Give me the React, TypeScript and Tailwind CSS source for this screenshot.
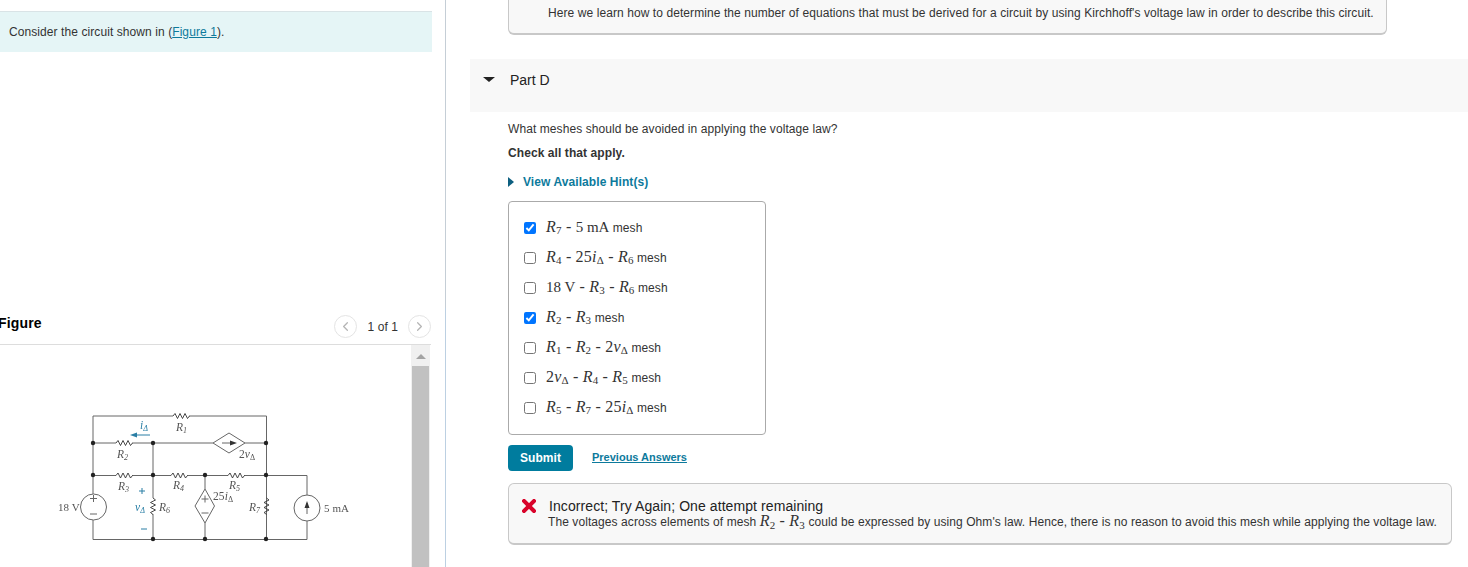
import type { ReactNode } from 'react';
import { Check, ChevronLeft, ChevronRight } from 'lucide-react';

function Sub({ children }: { children: ReactNode }) {
  return <sub className="text-[11px] not-italic">{children}</sub>;
}

function Math({ children }: { children: ReactNode }) {
  return <span className="font-['Liberation_Serif',serif] text-[16px] leading-none tracking-[0.2px] text-[#333]">{children}</span>;
}

function Unit({ children }: { children: ReactNode }) {
  return <span className="text-[15px] tracking-normal">{children}</span>;
}

function R({ n }: { n: number }) {
  return (
    <i>
      R<Sub>{n}</Sub>
    </i>
  );
}

const options: { checked: boolean; math: ReactNode }[] = [
  { checked: true, math: <><R n={7} /> - <Unit>5 mA</Unit></> },
  { checked: false, math: <><R n={4} /> - 25<i>i</i><Sub>Δ</Sub> - <R n={6} /></> },
  { checked: false, math: <><Unit>18 V</Unit> - <R n={3} /> - <R n={6} /></> },
  { checked: true, math: <><R n={2} /> - <R n={3} /></> },
  { checked: false, math: <><R n={1} /> - <R n={2} /> - 2<i>v</i><Sub>Δ</Sub></> },
  { checked: false, math: <>2<i>v</i><Sub>Δ</Sub> - <R n={4} /> - <R n={5} /></> },
  { checked: false, math: <><R n={5} /> - <R n={7} /> - 25<i>i</i><Sub>Δ</Sub></> },
];

function zigH(x: number, y: number) {
  return `M${x} ${y} l2 -2.5 l2.5 5 l2.5 -5 l2.5 5 l2.5 -5 l2.5 5 l2 -2.5`;
}

function zigV(x: number, y: number) {
  return `M${x} ${y} l2.5 2 l-5 2.5 l5 2.5 l-5 2.5 l5 2.5 l-5 2.5 l2.5 2`;
}

function Circuit() {
  const nodes = [
    [93, 443], [153, 443], [266, 443],
    [93, 475], [153, 475], [205, 475], [266, 475],
    [153, 539], [205, 539], [266, 539],
  ];
  return (
    <svg viewBox="0 345 410 222" className="block h-[222px] w-[410px] shrink-0 blur-[0.35px]">
      <g fill="none" stroke="#666" strokeWidth="1">
        <path d="M173 416H93V494M189 416H266.5V539.5M93 520V539.5H307V521M93 443H116M132 443H213M245 443H266" />
        <path d="M93 475.5H116M132 475.5H171M187 475.5H228M244 475.5H307V495M153 443V498M153 514V539M205 475V489M205 523V539M266.5 498V515" />
        <circle cx="93.5" cy="507" r="13" />
        <circle cx="307" cy="508" r="13" />
        <path d="M213 443L229 433L245 443L229 453Z" />
        <path d="M195 506L205 489L214.500 506L205 523Z" />
        <path d="M222 443H232M90 498.500H97M93.500 495V502M90 514H97M201.500 499H208.500M205 495.500V502.500M201.500 513H208.500" />
        <path d="M307 514V503" />
      </g>
      <g fill="none" stroke="#333" strokeWidth="0.9">
        <path d={zigH(173, 416)} />
        <path d={zigH(116, 443)} />
        <path d={zigH(116, 475.5)} />
        <path d={zigH(171, 475.5)} />
        <path d={zigH(228, 475.5)} />
        <path d={zigV(153, 498)} />
        <path d={zigV(266.5, 498)} />
      </g>
      <path d="M237 443L230 440.500V445.500Z M307 501L304.500 508H309.500Z" fill="#333" />
      <path d="M130 435L137 432.500V437.500Z" fill="#2a7fa5" />
      <path d="M135 435H150" stroke="#2a7fa5" strokeWidth="1" />
      {nodes.map(([x, y]) => (
        <circle key={`${x}-${y}`} cx={x} cy={y} r="2.200" fill="#222" />
      ))}
      <g fontFamily="'Liberation Serif', serif" fontSize="11.500" fill="#555">
        <text x="176" y="431" fontStyle="italic">R<tspan fontSize="8" dy="2">1</tspan></text>
        <text x="117" y="458" fontStyle="italic">R<tspan fontSize="8" dy="2">2</tspan></text>
        <text x="118" y="490" fontStyle="italic">R<tspan fontSize="8" dy="2">3</tspan></text>
        <text x="173" y="489" fontStyle="italic">R<tspan fontSize="8" dy="2">4</tspan></text>
        <text x="229" y="489" fontStyle="italic">R<tspan fontSize="8" dy="2">5</tspan></text>
        <text x="159" y="511" fontStyle="italic">R<tspan fontSize="8" dy="2">6</tspan></text>
        <text x="249" y="511" fontStyle="italic">R<tspan fontSize="8" dy="2">7</tspan></text>
        <text x="239" y="458">2<tspan fontStyle="italic">v</tspan><tspan fontSize="8" dy="2">Δ</tspan></text>
        <text x="213" y="500">25<tspan fontStyle="italic">i</tspan><tspan fontSize="8" dy="2">Δ</tspan></text>
        <text x="58" y="510.500" fontSize="11">18 V</text>
        <text x="324" y="511.500" fontSize="11">5 mA</text>
      </g>
      <g fontFamily="'Liberation Serif', serif" fontSize="11.500" fill="#2a7fa5">
        <text x="140" y="429" fontStyle="italic">i<tspan fontSize="8" dy="2">Δ</tspan></text>
        <text x="135" y="511" fontStyle="italic">v<tspan fontSize="8" dy="2">Δ</tspan></text>
      </g>
      <path d="M139 491H145M142 488V494M141 529H147" stroke="#2a7fa5" strokeWidth="1" />
    </svg>
  );
}

export default function App() {
  return (
    <div className="flex h-[567px] w-[1468px] overflow-hidden bg-white font-['Liberation_Sans',Arial,sans-serif] text-xs tracking-[0.08px] text-[#333]">
      <div className="flex w-[446px] shrink-0 flex-col">
        <div className="h-[308px] shrink-0 border-r border-[#c5ced6] pt-[11px]">
          <div className="flex h-[41px] w-[432px] items-center border-t border-[#d9e3e6] bg-[#e5f5f6] pl-[9px]">
            <p>
              Consider the circuit shown in (<a className="text-[#0d7a9c] underline">Figure 1</a>).
            </p>
          </div>
        </div>
        <div className="flex min-h-0 flex-1 flex-col border-r border-[#bcd0e2]">
          <div className="flex h-[37px] w-[431px] shrink-0 items-center border-b border-[#ddd]">
            <h2 className="-ml-[2px] -mt-[7px] text-sm font-bold tracking-[0.15px] text-black">Figure</h2>
            <div className="ml-auto flex items-center">
              <span className="flex h-[23px] w-[23px] items-center justify-center rounded-full border border-[#e4e4e4] text-[#b5b5b5]">
                <ChevronLeft size={15} />
              </span>
              <span className="mx-[10px] pt-px">1 of 1</span>
              <span className="flex h-[23px] w-[23px] items-center justify-center rounded-full border border-[#e4e4e4] text-[#b5b5b5]">
                <ChevronRight size={15} />
              </span>
            </div>
          </div>
          <div className="flex min-h-0 flex-1">
            <Circuit />
            <div className="ml-px flex w-[19px] shrink-0 flex-col items-center bg-[#f0f0f0]">
              <div className="mt-[9px] h-0 w-0 border-x-[5px] border-b-[5px] border-x-transparent border-b-[#a3a3a3]" />
              <div className="mt-[7px] w-[17px] flex-1 bg-[#c1c1c1]" />
            </div>
          </div>
        </div>
      </div>

      <div className="min-w-0 flex-1 pl-[24px]">
        <div className="-mt-[14px] ml-[38px] h-[49px] w-[879px] rounded-b-md border-x border-b-2 border-[#c8c8c8] bg-[#f8f8f8]">
          <div className="flex h-[18px] items-center pl-[12px]">
            <Check size={16} strokeWidth={3} className="text-[#4a9a2e]" />
            <p className="ml-[11px] text-sm font-bold leading-[18px] text-[#222]">Correct</p>
          </div>
          <p className="pl-[39px] pt-px">Here we learn how to determine the number of equations that must be derived for a circuit by using Kirchhoff's voltage law in order to describe this circuit.</p>
        </div>

        <div className="mt-[24px] flex h-[53px] items-center bg-[#f8f8f8] pb-[12px]">
          <span className="ml-[13px] h-0 w-0 border-x-[6px] border-t-[5px] border-x-transparent border-t-[#222]" />
          <h3 className="ml-[15px] text-sm tracking-normal text-[#222]">Part D</h3>
        </div>

        <div className="pl-[38px]">
          <p className="mt-[10px] leading-[14px]">What meshes should be avoided in applying the voltage law?</p>
          <p className="mt-[10px] font-bold leading-[14px]">Check all that apply.</p>
          <div className="mt-[15px] flex items-center gap-[9px] font-bold leading-[14px] text-[#0d7a9c]">
            <span className="h-0 w-0 border-y-[5px] border-l-[6px] border-y-transparent border-l-[#0d5f80]" />
            <span>View Available Hint(s)</span>
          </div>

          <div className="mt-[12px] flex h-[234px] w-[258px] flex-col rounded border border-[#aaa] px-[15px] py-[11px]">
            {options.map((o, i) => (
              <label key={i} className="flex h-[30px] items-center gap-[10px]">
                <input type="checkbox" checked={o.checked} readOnly className="m-0 h-3 w-3 shrink-0" />
                <span className="-mt-[2px]">
                  <Math>{o.math}</Math> mesh
                </span>
              </label>
            ))}
          </div>

          <div className="mt-[10px] flex items-center">
            <button className="h-[26px] w-[65px] rounded-sm bg-[#007c9e] text-xs font-bold text-white">Submit</button>
            <a className="ml-[19px] -mt-[1px] text-[11px] font-bold tracking-normal text-[#0d7a9c] underline">Previous Answers</a>
          </div>

          <div className="mt-[12px] flex h-[62px] w-[944px] rounded-md border border-b-2 border-[#c8c8c8] bg-[#f8f8f8] pl-[13px] pt-[15px]">
            <svg viewBox="0 0 14 14" className="h-[14px] w-[14px] shrink-0">
              <path d="M2 2L12 12M12 2L2 12" stroke="#d9042b" strokeWidth="4" strokeLinecap="square" fill="none" />
            </svg>
            <div className="ml-[13px] -mt-[1px]">
              <p className="text-sm leading-[16px] tracking-[0.08px] text-[#222]">Incorrect; Try Again; One attempt remaining</p>
              <p className="-ml-px -mt-px leading-[14px]">
                The voltages across elements of mesh <Math><R n={2} /> - <R n={3} /></Math> could be expressed by using Ohm's law. Hence, there is no reason to avoid this mesh while applying the voltage law.
              </p>
            </div>
          </div>
        </div>
      </div>
    </div>
  );
}
